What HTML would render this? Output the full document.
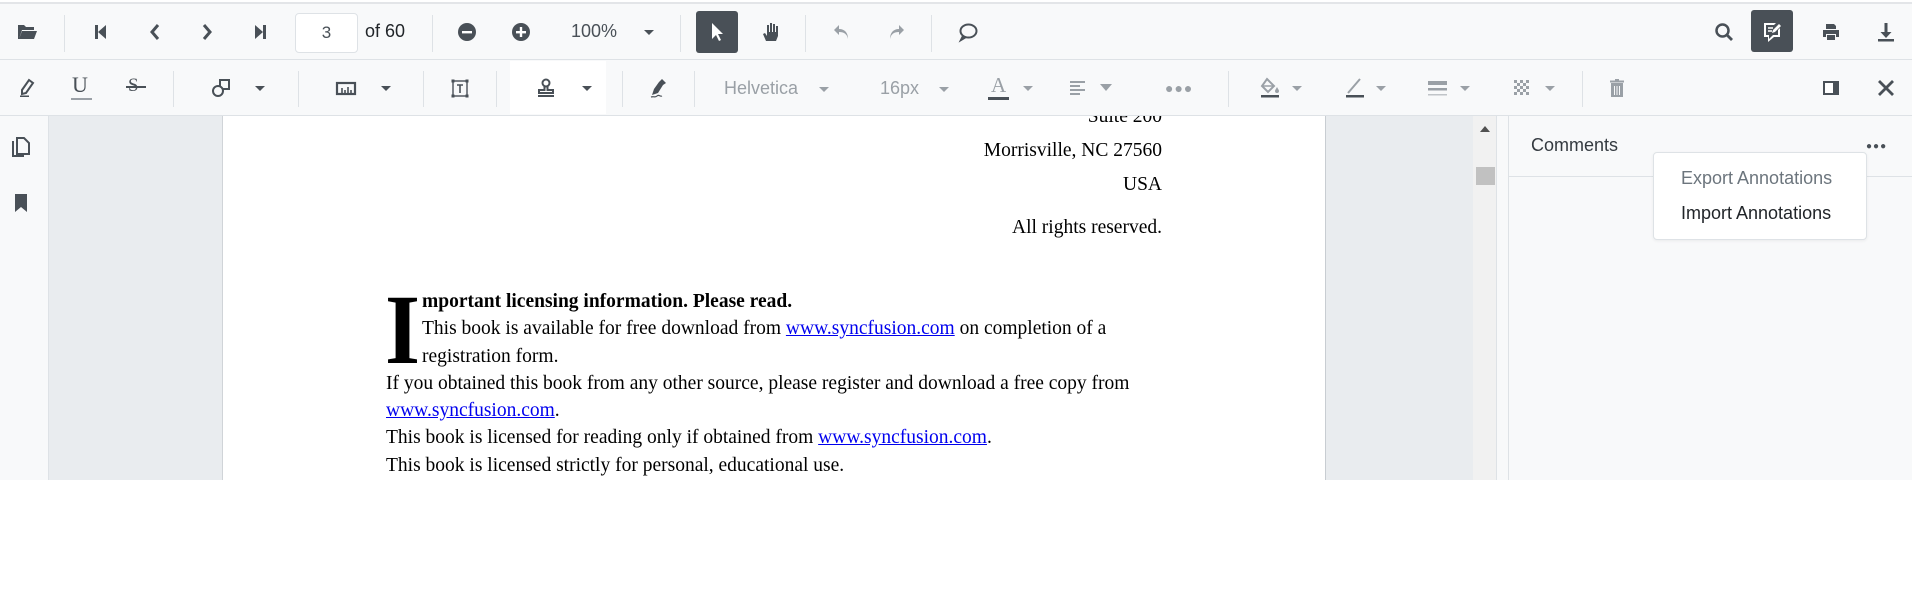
<!DOCTYPE html>
<html><head><meta charset="utf-8"><style>
*{margin:0;padding:0;box-sizing:border-box}
body{width:1918px;height:615px;background:#fff;position:relative;overflow:hidden;font-family:"Liberation Sans",Arial,sans-serif;color:#495057}
.a{position:absolute}
.tb{left:0;width:1912px;background:#f8f9fa;border-bottom:1px solid #dee2e6}
.sep{position:absolute;width:1px;background:#dee2e6}
.ic{position:absolute;width:22px;height:22px}
.ic svg{width:22px;height:22px;display:block}
.car{position:absolute;width:0;height:0;border-left:5px solid transparent;border-right:5px solid transparent;border-top:5px solid #495057}
.car.g{border-top-color:#9aa0a6}
.pt{position:absolute;font-family:"Liberation Serif","Times New Roman",serif;font-size:19.5px;color:#000;white-space:nowrap;line-height:1}
.pt a{color:#00e;text-decoration:underline}
</style></head><body>
<div class="a" style="left:0;top:2px;width:1912px;height:2px;background:#e3e5e8"></div>
<div class="a tb" style="top:4px;height:56px"></div>
<div class="a tb" style="top:60px;height:56px"></div>

<div class="sep" style="left:64px;top:15px;height:37px"></div>
<div class="sep" style="left:432px;top:15px;height:37px"></div>
<div class="sep" style="left:680px;top:15px;height:37px"></div>
<div class="sep" style="left:805px;top:15px;height:37px"></div>
<div class="sep" style="left:931px;top:15px;height:37px"></div>

<div class="ic" style="left:16px;top:21px"><svg viewBox="0 0 22 22"><path d="M2 4h6l2 2h8v3H6L3 18H2z M6 10h15l-3 8H3z" fill="#495057"/></svg></div>
<div class="ic" style="left:89px;top:21px"><svg viewBox="0 0 22 22"><rect x="6" y="4" width="3" height="14" fill="#495057"/><path d="M17 4v14L9 11z" fill="#495057"/></svg></div>
<div class="ic" style="left:144px;top:21px"><svg viewBox="0 0 22 22"><path d="M14 4l-6 7 6 7" stroke="#495057" stroke-width="3" fill="none"/></svg></div>
<div class="ic" style="left:196px;top:21px"><svg viewBox="0 0 22 22"><path d="M8 4l6 7-6 7" stroke="#495057" stroke-width="3" fill="none"/></svg></div>
<div class="ic" style="left:250px;top:21px"><svg viewBox="0 0 22 22"><path d="M5 4v14l8-7z" fill="#495057"/><rect x="13" y="4" width="3" height="14" fill="#495057"/></svg></div>
<div class="a" style="left:295px;top:13px;width:63px;height:40px;background:#fff;border:1px solid #dee2e6;border-radius:4px;font-size:17px;text-align:center;line-height:38px;color:#495057">3</div>
<div class="a" style="left:365px;top:21px;font-size:18px;color:#212529">of 60</div>
<div class="ic" style="left:456px;top:21px"><svg viewBox="0 0 22 22"><circle cx="11" cy="11" r="9" fill="#495057"/><rect x="6" y="10" width="10" height="2.4" fill="#fff"/></svg></div>
<div class="ic" style="left:510px;top:21px"><svg viewBox="0 0 22 22"><circle cx="11" cy="11" r="9" fill="#495057"/><rect x="6" y="10" width="10" height="2.4" fill="#fff"/><rect x="9.8" y="6" width="2.4" height="10" fill="#fff"/></svg></div>
<div class="a" style="left:571px;top:21px;font-size:18px;color:#495057">100%</div>
<div class="car" style="left:644px;top:30px"></div>
<div class="a" style="left:696px;top:11px;width:42px;height:42px;background:#495057;border-radius:3px"></div>
<div class="ic" style="left:706px;top:21px"><svg viewBox="0 0 22 22"><path d="M6 2v16l4-4 3 6 2-1-3-6h5z" fill="#fff"/></svg></div>
<div class="ic" style="left:760px;top:21px"><svg viewBox="0 0 22 22"><path d="M6 20l-3-7 2-1 2 3V4h2v7h1V2h2v9h1V3h2v8h1V5h2v10l-2 5z" fill="#495057"/></svg></div>
<div class="ic" style="left:831px;top:21px"><svg viewBox="0 0 22 22"><path d="M8 4L3 9l5 5V11c5 0 8 2 9 7 0-6-3-10-9-10z" fill="#9aa0a6"/></svg></div>
<div class="ic" style="left:885px;top:21px"><svg viewBox="0 0 22 22"><path d="M14 4l5 5-5 5V11c-5 0-8 2-9 7 0-6 3-10 9-10z" fill="#9aa0a6"/></svg></div>
<div class="ic" style="left:957px;top:21px"><svg viewBox="0 0 22 22"><ellipse cx="11.5" cy="10" rx="8" ry="6.5" stroke="#495057" stroke-width="2" fill="none"/><path d="M6 15l-2 4 5-3" stroke="#495057" stroke-width="2" fill="none"/></svg></div>
<div class="ic" style="left:1713px;top:21px"><svg viewBox="0 0 22 22"><circle cx="9.5" cy="9.5" r="6" stroke="#495057" stroke-width="2.5" fill="none"/><path d="M14 14l5 5" stroke="#495057" stroke-width="2.8"/></svg></div>
<div class="a" style="left:1751px;top:10px;width:42px;height:42px;background:#495057;border-radius:3px"></div>
<div class="ic" style="left:1761px;top:20px"><svg viewBox="0 0 22 22"><path d="M3 3h12l-2 2H5v10h3v4l4-4h5V10l2-2v9h-6l-6 5v-5H3z" fill="#fff"/><path d="M7 8h5M7 11h4" stroke="#fff" stroke-width="1.6"/><path d="M11 13l1-3 6-6 2 2-6 6z" fill="#fff"/></svg></div>
<div class="ic" style="left:1820px;top:21px"><svg viewBox="0 0 22 22"><path d="M6 3h8l2 2v3H6z M3 9h16v7h-3v-3H6v3H3z M7 14h8v5H7z" fill="#495057"/></svg></div>
<div class="ic" style="left:1875px;top:21px"><svg viewBox="0 0 22 22"><path d="M9.5 2h3v9h4l-5.5 6-5.5-6h4z" fill="#495057"/><rect x="3" y="18" width="16" height="2.5" fill="#495057"/></svg></div>

<div class="sep" style="left:173px;top:71px;height:36px"></div>
<div class="sep" style="left:298px;top:71px;height:36px"></div>
<div class="sep" style="left:423px;top:71px;height:36px"></div>
<div class="sep" style="left:496px;top:71px;height:36px"></div>
<div class="sep" style="left:622px;top:71px;height:36px"></div>
<div class="sep" style="left:694px;top:71px;height:36px"></div>
<div class="sep" style="left:1228px;top:71px;height:36px"></div>
<div class="sep" style="left:1582px;top:71px;height:36px"></div>

<div class="ic" style="left:16px;top:77px"><svg viewBox="0 0 22 22"><path d="M13 3l4 3-7 10-4 1 0-4z" stroke="#495057" stroke-width="2" fill="none"/><rect x="4" y="18.5" width="9" height="1.5" fill="#495057"/></svg></div>
<div class="a" style="left:72px;top:74px;font-family:'Liberation Serif',serif;font-size:22px;color:#495057;line-height:22px">U</div>
<div class="a" style="left:71px;top:98px;width:21px;height:2px;background:#9aa0a6"></div>
<div class="a" style="left:128px;top:76px;font-family:'Liberation Serif',serif;font-size:19px;color:#495057;line-height:20px">S</div>
<div class="a" style="left:126px;top:86px;width:20px;height:1.5px;background:#495057"></div>
<div class="ic" style="left:210px;top:77px"><svg viewBox="0 0 22 22"><circle cx="8" cy="14" r="5" stroke="#495057" stroke-width="2" fill="none"/><path d="M10 9V3h9v9h-6" stroke="#495057" stroke-width="2" fill="none"/></svg></div>
<div class="car" style="left:255px;top:86px"></div>
<div class="ic" style="left:335px;top:77px"><svg viewBox="0 0 22 22"><rect x="2" y="6" width="18" height="11" stroke="#495057" stroke-width="2.2" fill="none"/><path d="M7 11v5M10 13v3M13 10v6M16 13v3" stroke="#495057" stroke-width="1.6"/></svg></div>
<div class="car" style="left:381px;top:86px"></div>
<div class="ic" style="left:449px;top:77px"><svg viewBox="0 0 22 22"><rect x="4" y="4" width="14" height="15" stroke="#495057" stroke-width="1.4" fill="none"/><path d="M8 8h6M11 8v8" stroke="#495057" stroke-width="1.6"/><rect x="2.5" y="2.5" width="3" height="3" fill="#495057"/><rect x="16.5" y="2.5" width="3" height="3" fill="#495057"/><rect x="2.5" y="17.5" width="3" height="3" fill="#495057"/><rect x="16.5" y="17.5" width="3" height="3" fill="#495057"/></svg></div>
<div class="a" style="left:510px;top:61px;width:96px;height:53px;background:#fff"></div>
<div class="ic" style="left:535px;top:77px"><svg viewBox="0 0 22 22"><circle cx="11" cy="6" r="3.5" stroke="#495057" stroke-width="2" fill="none"/><path d="M9.5 9v4H4v3h14v-3h-5.5V9" stroke="#495057" stroke-width="2" fill="none"/><rect x="3" y="18" width="16" height="2" fill="#495057"/></svg></div>
<div class="car" style="left:582px;top:86px"></div>
<div class="ic" style="left:647px;top:77px"><svg viewBox="0 0 22 22"><path d="M15 2l4 4-3 2-5 8-6 2 2-6 5-7z" fill="#495057"/><path d="M4 20c3-1 4 1 6-1s3 1 5 0" stroke="#495057" stroke-width="1.2" fill="none"/></svg></div>
<div class="a" style="left:724px;top:78px;font-size:18px;color:#9aa0a6">Helvetica</div>
<div class="car g" style="left:819px;top:87px"></div>
<div class="a" style="left:880px;top:78px;font-size:18px;color:#9aa0a6">16px</div>
<div class="car g" style="left:939px;top:87px"></div>
<div class="a" style="left:991px;top:74px;font-family:'Liberation Serif',serif;font-size:21px;color:#9aa0a6;line-height:22px">A</div>
<div class="a" style="left:988px;top:97px;width:21px;height:3px;background:#495057"></div>
<div class="car g" style="left:1023px;top:86px"></div>
<div class="ic" style="left:1068px;top:77px"><svg viewBox="0 0 22 22"><path d="M2 5h15M2 9h10M2 13h15M2 17h10" stroke="#9aa0a6" stroke-width="2"/></svg></div>
<div class="a" style="left:1100px;top:84px;border-left:6px solid transparent;border-right:6px solid transparent;border-top:7px solid #9aa0a6"></div>
<div class="a" style="left:1165px;top:80px;font-size:14px;color:#9aa0a6;letter-spacing:1px">&#9679;&#9679;&#9679;</div>
<div class="ic" style="left:1259px;top:77px"><svg viewBox="0 0 22 22"><path d="M8 2l7 7-6 6-6-6z" stroke="#9aa0a6" stroke-width="2" fill="none"/><path d="M4 9h11" stroke="#9aa0a6" stroke-width="1.5"/><path d="M18 10c1 2 2 3 2 4a2 2 0 01-4 0c0-1 1-2 2-4z" fill="#9aa0a6"/><rect x="2" y="18" width="18" height="2.5" fill="#495057"/></svg></div>
<div class="car g" style="left:1292px;top:86px"></div>
<div class="ic" style="left:1344px;top:77px"><svg viewBox="0 0 22 22"><path d="M4 16L16 2" stroke="#9aa0a6" stroke-width="2"/><rect x="2" y="18" width="18" height="2.5" fill="#495057"/></svg></div>
<div class="car g" style="left:1376px;top:86px"></div>
<div class="ic" style="left:1427px;top:77px"><svg viewBox="0 0 22 22"><rect x="1" y="4" width="19" height="4" fill="#9aa0a6"/><rect x="1" y="11" width="19" height="2.5" fill="#9aa0a6"/><rect x="1" y="17" width="19" height="1.5" fill="#c0c4c8"/></svg></div>
<div class="car g" style="left:1460px;top:86px"></div>
<div class="ic" style="left:1512px;top:77px"><svg viewBox="0 0 22 22"><g fill="#9aa0a6"><rect x="2" y="3" width="3" height="3"/><rect x="8" y="3" width="3" height="3"/><rect x="14" y="3" width="3" height="3"/><rect x="5" y="6" width="3" height="3"/><rect x="11" y="6" width="3" height="3"/><rect x="2" y="9" width="3" height="3"/><rect x="8" y="9" width="3" height="3"/><rect x="14" y="9" width="3" height="3"/><rect x="5" y="12" width="3" height="3"/><rect x="11" y="12" width="3" height="3"/><rect x="2" y="15" width="3" height="3"/><rect x="8" y="15" width="3" height="3"/><rect x="14" y="15" width="3" height="3"/></g></svg></div>
<div class="car g" style="left:1545px;top:86px"></div>
<div class="ic" style="left:1606px;top:77px"><svg viewBox="0 0 22 22"><path d="M5 6h12v14H5z" fill="#9aa0a6"/><rect x="4" y="3.5" width="14" height="2" fill="#9aa0a6"/><rect x="9" y="2" width="4" height="2" fill="#9aa0a6"/><path d="M8.5 9v9M11 9v9M13.5 9v9" stroke="#f8f9fa" stroke-width="1"/></svg></div>
<div class="ic" style="left:1820px;top:77px"><svg viewBox="0 0 22 22"><rect x="3" y="4" width="16" height="14" fill="#495057"/><rect x="5" y="6" width="8" height="10" fill="#fff"/></svg></div>
<div class="ic" style="left:1875px;top:77px"><svg viewBox="0 0 22 22"><path d="M4 4l14 14M18 4L4 18" stroke="#495057" stroke-width="2.8"/></svg></div>

<div class="a" style="left:0;top:116px;width:49px;height:364px;background:#f8f9fa;border-right:1px solid #dee2e6"></div>
<div class="ic" style="left:10px;top:136px"><svg viewBox="0 0 22 22"><path d="M3 5v15h11" stroke="#495057" stroke-width="2" fill="none"/><path d="M7 2h7l5 5v11H7z" stroke="#495057" stroke-width="2" fill="none"/></svg></div>
<div class="ic" style="left:10px;top:192px"><svg viewBox="0 0 22 22"><path d="M5 2h12v18l-6-5-6 5z" fill="#495057"/></svg></div>
<div class="a" style="left:49px;top:116px;width:1424px;height:364px;background:#e9ecef"></div>
<div class="a" style="left:222px;top:116px;width:1px;height:364px;background:#d0d4d8"></div>
<div class="a" style="left:223px;top:116px;width:1102px;height:364px;background:#fff;overflow:hidden">
  <div class="pt" style="right:163px;top:-9px">Suite 200</div>
  <div class="pt" style="right:163px;top:25px">Morrisville, NC 27560</div>
  <div class="pt" style="right:163px;top:59px">USA</div>
  <div class="pt" style="right:163px;top:102px">All rights reserved.</div>
  <div class="pt" style="left:162px;top:164px;font-size:100px;font-weight:bold;line-height:100px;transform:scaleX(0.9);transform-origin:left">I</div>
  <div class="pt" style="left:199px;top:176px;font-weight:bold">mportant licensing information. Please read.</div>
  <div class="pt" style="left:199px;top:203px">This book is available for free download from <a>www.syncfusion.com</a> on completion of a</div>
  <div class="pt" style="left:199px;top:231px">registration form.</div>
  <div class="pt" style="left:163px;top:258px">If you obtained this book from any other source, please register and download a free copy from</div>
  <div class="pt" style="left:163px;top:285px"><a>www.syncfusion.com</a>.</div>
  <div class="pt" style="left:163px;top:312px">This book is licensed for reading only if obtained from <a>www.syncfusion.com</a>.</div>
  <div class="pt" style="left:163px;top:340px">This book is licensed strictly for personal, educational use.</div>
</div>
<div class="a" style="left:1325px;top:116px;width:1px;height:364px;background:#c8cdd2"></div>
<div class="a" style="left:1473px;top:116px;width:23px;height:364px;background:#f1f1f1"></div>
<div class="a" style="left:1480px;top:126px;border-left:5px solid transparent;border-right:5px solid transparent;border-bottom:6px solid #505050"></div>
<div class="a" style="left:1476px;top:167px;width:19px;height:18px;background:#c1c1c1"></div>
<div class="a" style="left:1496px;top:116px;width:13px;height:364px;background:#f8f9fa;border-left:1px solid #dee2e6;border-right:1px solid #dee2e6"></div>
<div class="a" style="left:1509px;top:116px;width:403px;height:364px;background:#f8f9fa"></div>
<div class="a" style="left:1509px;top:176px;width:403px;height:1px;background:#dee2e6"></div>
<div class="a" style="left:1531px;top:135px;font-size:18px;color:#343a40">Comments</div>
<div class="a" style="left:1866px;top:141px;font-size:10px;color:#495057;letter-spacing:1px">&#9679;&#9679;&#9679;</div>
<div class="a" style="left:1653px;top:152px;width:214px;height:88px;background:#fff;border:1px solid #dee2e6;border-radius:4px;box-shadow:0 1px 3px rgba(0,0,0,.06)"></div>
<div class="a" style="left:1681px;top:168px;font-size:18px;color:#6c757d">Export Annotations</div>
<div class="a" style="left:1681px;top:203px;font-size:18px;color:#212529">Import Annotations</div>
</body></html>
